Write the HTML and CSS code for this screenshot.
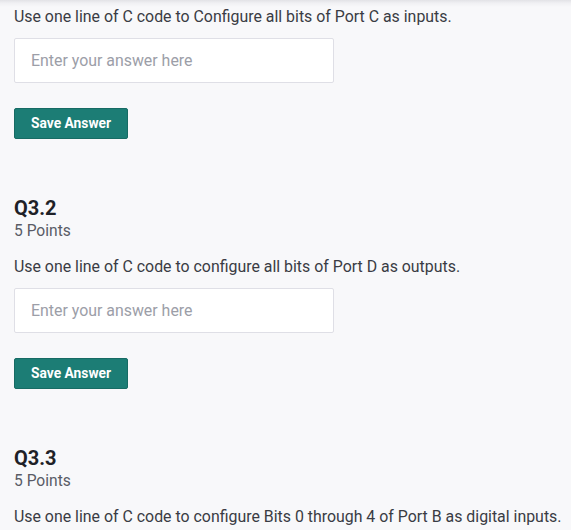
FILE: index.html
```html
<!DOCTYPE html>
<html>
<head>
<meta charset="utf-8">
<link rel="stylesheet" href="styles.css">
</head>
<body>
<div class="frame">
  <main class="page">
    <section class="question first">
      <p class="prompt">Use one line of C code to Configure all bits of Port C as inputs.</p>
      <input class="answer" type="text" placeholder="Enter your answer here">
      <button class="save">Save Answer</button>
    </section>
    <section class="question">
      <h2 class="qtitle">Q3.2</h2>
      <div class="points">5 Points</div>
      <p class="prompt">Use one line of C code to configure all bits of Port D as outputs.</p>
      <input class="answer" type="text" placeholder="Enter your answer here">
      <button class="save">Save Answer</button>
    </section>
    <section class="question">
      <h2 class="qtitle">Q3.3</h2>
      <div class="points">5 Points</div>
      <p class="prompt">Use one line of C code to configure Bits 0 through 4 of Port B as digital inputs.</p>
    </section>
  </main>
  <div class="rail"></div>
</div>
</body>
</html>
```
FILE: styles.css
```css
html, body {
  margin: 0;
  padding: 0;
  height: 100%;
}
body {
  font-family: "Roboto", "Liberation Sans", sans-serif;
  color: #3b3d45;
  background: #f8f8fa;
  overflow: hidden;
}
.frame {
  display: flex;
  height: 100%;
}
.page {
  flex: 1;
  padding: 0 14px;
  background: linear-gradient(#e2e2e6 0, #f0f0f3 3px, #f8f8fa 7px, #f8f8fa 100%);
}
.rail {
  width: 6px;
  background: linear-gradient(#ececef 0, #ffffff 6px);
}
.question {
  display: flex;
  flex-direction: column;
  align-items: flex-start;
  padding-top: 58.4px;
}
.question.first {
  padding-top: 5.5px;
}
.prompt {
  margin: 0;
  font-size: 15.9px;
  line-height: 22px;
  color: #3a3c44;
  white-space: nowrap;
}
.points + .prompt {
  margin-top: 14px;
}
.qtitle {
  margin: 0;
  font-size: 20px;
  line-height: 23px;
  font-weight: 700;
  color: #1e2127;
}
.points {
  font-size: 15.6px;
  line-height: 22px;
  color: #5a5c66;
}
.answer {
  box-sizing: border-box;
  margin-top: 10px;
  width: 320px;
  height: 45px;
  border: 1px solid #dfdfe6;
  border-radius: 2px;
  background: #ffffff;
  padding: 0 16px;
  font-family: inherit;
  font-size: 15.9px;
  color: #3a3c44;
  outline: none;
}
.answer::placeholder {
  color: #9c9ea8;
}
.save {
  box-sizing: border-box;
  margin-top: 25px;
  width: 114px;
  height: 31px;
  background: #1c7d75;
  border: 1px solid #176b64;
  border-radius: 2px;
  color: #ffffff;
  font-family: inherit;
  font-size: 13.8px;
  font-weight: 700;
  padding: 0;
}
```
